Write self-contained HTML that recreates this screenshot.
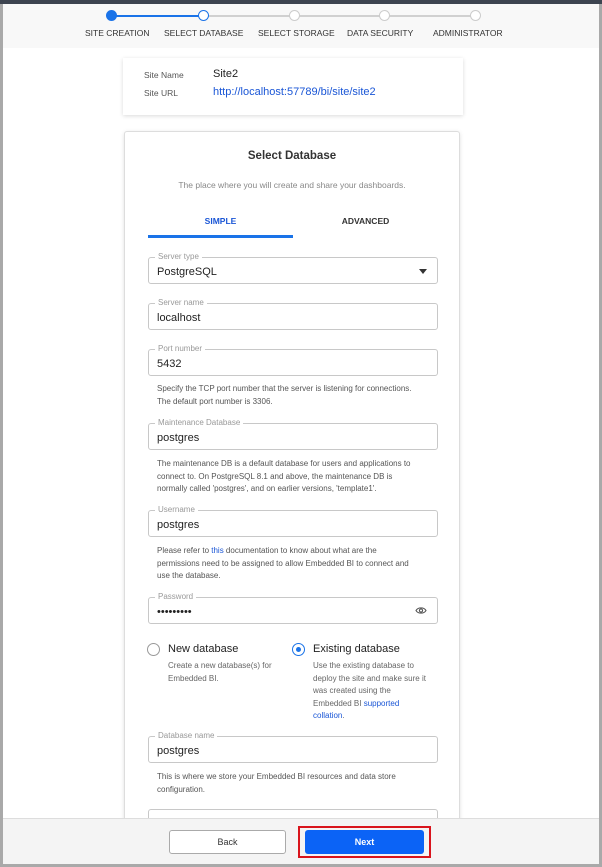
<!DOCTYPE html>
<html><head><meta charset="utf-8"><style>
*{box-sizing:border-box;margin:0;padding:0}
body{width:602px;height:867px;overflow:hidden;background:#a9a9a9;font-family:"Liberation Sans",Arial,sans-serif;position:relative}
.frame{position:absolute;left:3px;top:4px;width:596px;height:860px;background:#fff;overflow:hidden}
.topbar{position:absolute;left:0;top:0;width:602px;height:4px;background:#3d4450}
.hdr{position:absolute;left:0;top:0;width:596px;height:44px;background:#f8f8f8}
.a{position:absolute}
.step{font-size:8.5px;color:#333;top:24px}
.dot{position:absolute;width:11px;height:11px;border-radius:50%;top:6px;background:#fff;border:1.5px solid #ccc}
.line{position:absolute;height:2px;top:10.5px;background:#d0d0d0}
.info{left:120px;top:54px;width:340px;height:57px;box-shadow:0 1px 4px rgba(0,0,0,.15);background:#fff}
.card{left:121px;top:127px;width:336px;height:720px;border:1px solid #ddd;border-radius:3px;box-shadow:0 1px 4px rgba(0,0,0,.12);background:#fff}
.f{position:absolute;left:145px;width:290px;height:27px;border:1px solid #c8c8c8;border-radius:3px;font-size:11px;color:#222;padding:8px 0 0 8px}
.f .l{position:absolute;top:-6px;left:6px;background:#fff;padding:0 3px;font-size:8px;color:#999}
.h{position:absolute;left:154px;font-size:8px;color:#555;line-height:12.5px}
.lnk{color:#1a56d6}
.foot{position:absolute;left:0;top:814px;width:596px;height:46px;background:#f4f4f4;border-top:1px solid #ddd}
</style></head><body>
<div class="topbar"></div>
<div class="frame">
<div class="hdr"></div>
<div class="line" style="left:108px;width:92px;background:#1a73e8"></div>
<div class="line" style="left:200px;width:272px"></div>
<div class="dot" style="left:103px;background:#1a73e8;border-color:#1a73e8"></div>
<div class="dot" style="left:195px;border-color:#1a73e8"></div>
<div class="dot" style="left:286px"></div>
<div class="dot" style="left:376px"></div>
<div class="dot" style="left:467px"></div>
<div class="a step" style="left:82px">SITE CREATION</div>
<div class="a step" style="left:161px">SELECT DATABASE</div>
<div class="a step" style="left:255px">SELECT STORAGE</div>
<div class="a step" style="left:344px">DATA SECURITY</div>
<div class="a step" style="left:430px">ADMINISTRATOR</div>
<div class="a info"></div>
<div class="a" style="left:141px;top:66px;font-size:8.5px;color:#555">Site Name</div>
<div class="a" style="left:210px;top:64px;font-size:11px;color:#222">Site2</div>
<div class="a" style="left:141px;top:84px;font-size:8.5px;color:#555">Site URL</div>
<div class="a lnk" style="left:210px;top:82px;font-size:11px">http://localhost:57789/bi/site/site2</div>
<div class="a card"></div>
<div class="a" style="left:121px;width:336px;text-align:center;top:146px;font-size:11.5px;color:#333;font-weight:bold">Select Database</div>
<div class="a" style="left:121px;width:336px;text-align:center;top:176px;font-size:8.5px;color:#888">The place where you will create and share your dashboards.</div>
<div class="a" style="left:145px;width:145px;text-align:center;top:212px;font-size:8.5px;color:#1a56d6;font-weight:bold">SIMPLE</div>
<div class="a" style="left:290px;width:145px;text-align:center;top:212px;font-size:8.5px;color:#333;font-weight:bold">ADVANCED</div>
<div class="a" style="left:145px;top:231px;width:145px;height:3px;background:#1a73e8"></div>
<div class="f" style="top:253px"><span class="l">Server type</span>PostgreSQL<span style="position:absolute;right:10px;top:11px;border-left:4px solid transparent;border-right:4px solid transparent;border-top:5px solid #333"></span></div>
<div class="f" style="top:299px"><span class="l">Server name</span>localhost</div>
<div class="f" style="top:345px"><span class="l">Port number</span>5432</div>
<div class="h" style="top:379px">Specify the TCP port number that the server is listening for connections.<br>The default port number is 3306.</div>
<div class="f" style="top:419px"><span class="l">Maintenance Database</span>postgres</div>
<div class="h" style="top:454px">The maintenance DB is a default database for users and applications to<br>connect to. On PostgreSQL 8.1 and above, the maintenance DB is<br>normally called 'postgres', and on earlier versions, 'template1'.</div>
<div class="f" style="top:506px"><span class="l">Username</span>postgres</div>
<div class="h" style="top:541px">Please refer to <span class="lnk">this</span> documentation to know about what are the<br>permissions need to be assigned to allow Embedded BI to connect and<br>use the database.</div>
<div class="f" style="top:593px"><span class="l">Password</span>•••••••••
<svg style="position:absolute;right:10px;top:8px" width="12" height="9" viewBox="0 0 12 9"><path d="M1 4.5C3 1 9 1 11 4.5C9 8 3 8 1 4.5Z" fill="none" stroke="#555" stroke-width="1.1"/><circle cx="6" cy="4.5" r="1.6" fill="none" stroke="#555" stroke-width="1.1"/></svg></div>
<div class="a" style="left:144px;top:639px;width:13px;height:13px;border:1.5px solid #999;border-radius:50%"></div>
<div class="a" style="left:165px;top:639px;font-size:11px;color:#222">New database</div>
<div class="a" style="left:165px;top:656px;font-size:8px;color:#666;line-height:12.5px">Create a new database(s) for<br>Embedded BI.</div>
<div class="a" style="left:289px;top:639px;width:13px;height:13px;border:1.5px solid #1a73e8;border-radius:50%"><div style="margin:2.5px;width:5px;height:5px;border-radius:50%;background:#1a73e8"></div></div>
<div class="a" style="left:310px;top:639px;font-size:11px;color:#222">Existing database</div>
<div class="a" style="left:310px;top:656px;font-size:8px;color:#666;line-height:12.6px">Use the existing database to<br>deploy the site and make sure it<br>was created using the<br>Embedded BI <span class="lnk">supported<br>collation</span>.</div>
<div class="f" style="top:732px"><span class="l">Database name</span>postgres</div>
<div class="h" style="top:767px">This is where we store your Embedded BI resources and data store<br>configuration.</div>
<div class="f" style="top:805px"></div>
<div class="foot"></div>
<div class="a" style="left:166px;top:826px;width:117px;height:24px;border:1px solid #aaa;border-radius:3px;background:#fff;text-align:center;font-size:9px;line-height:22px;color:#333">Back</div>
<div class="a" style="left:295px;top:822px;width:133px;height:32px;border:2px solid #d9141c"></div>
<div class="a" style="left:302px;top:826px;width:119px;height:24px;border-radius:3px;background:#0b63f6;text-align:center;font-size:9px;line-height:24px;color:#fff;font-weight:bold">Next</div>
</div>
</body></html>
